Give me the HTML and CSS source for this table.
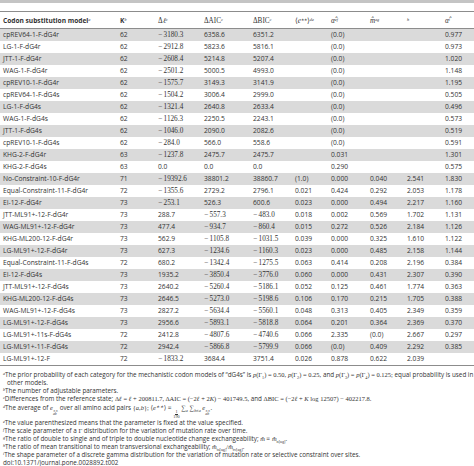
FILE: index.html
```html
<!DOCTYPE html>
<html>
<head>
<meta charset="utf-8">
<link rel="stylesheet" href="styles.css">
</head>
<body>
<div class="topband"></div>
<table class="data">
<colgroup>
<col class="w1"><col class="w2"><col class="w3"><col class="w4"><col class="w5"><col class="w6"><col class="w7"><col class="w8"><col class="w9"><col class="w10">
</colgroup>
<thead>
<tr>
<th class="first">Codon substitution model<sup>a</sup></th>
<th>K<sup>b</sup></th>
<th class="m">Δ<i>ℓ</i><sup>c</sup></th>
<th class="m">ΔAIC<sup>c</sup></th>
<th class="m">ΔBIC<sup>c</sup></th>
<th class="m">⟨<i>e</i><sup class="in">∗∗</sup>⟩<sup>de</sup></th>
<th class="m"><i>α̂</i><sup>ef</sup></th>
<th class="m"><i>m̂</i><sup>eg</sup></th>
<th class="m"><sup>h</sup></th>
<th class="m"><i>α̂</i><sup>i</sup></th>
</tr>
</thead>
<tbody>
<tr><td class="first">cpREV64-1-F-dG4r</td><td>62</td><td class="neg">−<span>3180.3</span></td><td>6358.6</td><td>6351.2</td><td></td><td>(0.0)</td><td></td><td></td><td>0.977</td></tr>
<tr><td class="first">LG-1-F-dG4r</td><td>62</td><td class="neg">−<span>2912.8</span></td><td>5823.6</td><td>5816.1</td><td></td><td>(0.0)</td><td></td><td></td><td>0.973</td></tr>
<tr><td class="first">JTT-1-F-dG4r</td><td>62</td><td class="neg">−<span>2608.4</span></td><td>5214.8</td><td>5207.4</td><td></td><td>(0.0)</td><td></td><td></td><td>1.020</td></tr>
<tr><td class="first">WAG-1-F-dG4r</td><td>62</td><td class="neg">−<span>2501.2</span></td><td>5000.5</td><td>4993.0</td><td></td><td>(0.0)</td><td></td><td></td><td>1.148</td></tr>
<tr><td class="first">cpREV10-1-F-dG4r</td><td>62</td><td class="neg">−<span>1575.7</span></td><td>3149.3</td><td>3141.9</td><td></td><td>(0.0)</td><td></td><td></td><td>1.195</td></tr>
<tr><td class="first">cpREV64-1-F-dG4s</td><td>62</td><td class="neg">−<span>1504.2</span></td><td>3006.4</td><td>2999.0</td><td></td><td>(0.0)</td><td></td><td></td><td>0.505</td></tr>
<tr><td class="first">LG-1-F-dG4s</td><td>62</td><td class="neg">−<span>1321.4</span></td><td>2640.8</td><td>2633.4</td><td></td><td>(0.0)</td><td></td><td></td><td>0.496</td></tr>
<tr><td class="first">WAG-1-F-dG4s</td><td>62</td><td class="neg">−<span>1126.3</span></td><td>2250.5</td><td>2243.1</td><td></td><td>(0.0)</td><td></td><td></td><td>0.573</td></tr>
<tr><td class="first">JTT-1-F-dG4s</td><td>62</td><td class="neg">−<span>1046.0</span></td><td>2090.0</td><td>2082.6</td><td></td><td>(0.0)</td><td></td><td></td><td>0.519</td></tr>
<tr><td class="first">cpREV10-1-F-dG4s</td><td>62</td><td class="neg">−<span>284.0</span></td><td>566.0</td><td>558.6</td><td></td><td>(0.0)</td><td></td><td></td><td>0.591</td></tr>
<tr><td class="first">KHG-2-F-dG4r</td><td>63</td><td class="neg">−<span>1237.8</span></td><td>2475.7</td><td>2475.7</td><td></td><td>0.031</td><td></td><td></td><td>1.301</td></tr>
<tr><td class="first">KHG-2-F-dG4s</td><td>63</td><td>0.0</td><td>0.0</td><td>0.0</td><td></td><td>0.290</td><td></td><td></td><td>0.575</td></tr>
<tr><td class="first">No-Constraint-10-F-dG4r</td><td>71</td><td class="neg">−<span>19392.6</span></td><td>38801.2</td><td>38860.7</td><td>(1.0)</td><td>0.000</td><td>0.040</td><td>2.541</td><td>1.830</td></tr>
<tr><td class="first">Equal-Constraint-11-F-dG4r</td><td>72</td><td class="neg">−<span>1355.6</span></td><td>2729.2</td><td>2796.1</td><td>0.021</td><td>0.424</td><td>0.292</td><td>2.053</td><td>1.178</td></tr>
<tr><td class="first">EI-12-F-dG4r</td><td>73</td><td class="neg">−<span>253.1</span></td><td>526.3</td><td>600.6</td><td>0.023</td><td>0.000</td><td>0.494</td><td>2.217</td><td>1.160</td></tr>
<tr><td class="first">JTT-ML91+-12-F-dG4r</td><td>73</td><td>288.7</td><td class="neg">−<span>557.3</span></td><td class="neg">−<span>483.0</span></td><td>0.018</td><td>0.002</td><td>0.569</td><td>1.702</td><td>1.131</td></tr>
<tr><td class="first">WAG-ML91+-12-F-dG4r</td><td>73</td><td>477.4</td><td class="neg">−<span>934.7</span></td><td class="neg">−<span>860.4</span></td><td>0.015</td><td>0.272</td><td>0.526</td><td>2.184</td><td>1.126</td></tr>
<tr><td class="first">KHG-ML200-12-F-dG4r</td><td>73</td><td>562.9</td><td class="neg">−<span>1105.8</span></td><td class="neg">−<span>1031.5</span></td><td>0.039</td><td>0.000</td><td>0.325</td><td>1.610</td><td>1.122</td></tr>
<tr><td class="first">LG-ML91+-12-F-dG4r</td><td>73</td><td>627.3</td><td class="neg">−<span>1234.6</span></td><td class="neg">−<span>1160.3</span></td><td>0.023</td><td>0.000</td><td>0.485</td><td>2.158</td><td>1.144</td></tr>
<tr><td class="first">Equal-Constraint-11-F-dG4s</td><td>72</td><td>680.2</td><td class="neg">−<span>1342.4</span></td><td class="neg">−<span>1275.5</span></td><td>0.063</td><td>0.414</td><td>0.208</td><td>2.196</td><td>0.384</td></tr>
<tr><td class="first">EI-12-F-dG4s</td><td>73</td><td>1935.2</td><td class="neg">−<span>3850.4</span></td><td class="neg">−<span>3776.0</span></td><td>0.060</td><td>0.000</td><td>0.431</td><td>2.307</td><td>0.390</td></tr>
<tr><td class="first">JTT-ML91+-12-F-dG4s</td><td>73</td><td>2640.2</td><td class="neg">−<span>5260.4</span></td><td class="neg">−<span>5186.1</span></td><td>0.052</td><td>0.125</td><td>0.461</td><td>1.774</td><td>0.363</td></tr>
<tr><td class="first">KHG-ML200-12-F-dG4s</td><td>73</td><td>2646.5</td><td class="neg">−<span>5273.0</span></td><td class="neg">−<span>5198.6</span></td><td>0.106</td><td>0.170</td><td>0.215</td><td>1.705</td><td>0.388</td></tr>
<tr><td class="first">WAG-ML91+-12-F-dG4s</td><td>73</td><td>2827.2</td><td class="neg">−<span>5634.4</span></td><td class="neg">−<span>5560.1</span></td><td>0.048</td><td>0.313</td><td>0.405</td><td>2.349</td><td>0.359</td></tr>
<tr><td class="first">LG-ML91+-12-F-dG4s</td><td>73</td><td>2956.6</td><td class="neg">−<span>5893.1</span></td><td class="neg">−<span>5818.8</span></td><td>0.064</td><td>0.201</td><td>0.364</td><td>2.369</td><td>0.370</td></tr>
<tr><td class="first">LG-ML91+-11s-F-dG4s</td><td>72</td><td>2412.8</td><td class="neg">−<span>4807.6</span></td><td class="neg">−<span>4740.6</span></td><td>0.066</td><td>2.335</td><td>(0.0)</td><td>2.667</td><td>0.297</td></tr>
<tr><td class="first">LG-ML91+-11-F-dG4s</td><td>72</td><td>2942.4</td><td class="neg">−<span>5866.8</span></td><td class="neg">−<span>5799.9</span></td><td>0.066</td><td>(0.0)</td><td>0.409</td><td>2.292</td><td>0.385</td></tr>
<tr><td class="first">LG-ML91+-12-F</td><td>72</td><td class="neg">−<span>1833.2</span></td><td>3684.4</td><td>3751.4</td><td>0.026</td><td>0.878</td><td>0.622</td><td>2.039</td><td></td></tr>
</tbody>
</table>
<div class="notes">
<p class="note"><sup>a</sup>The prior probability of each category for the mechanistic codon models of “dG4s” is <span class="m"><i>p</i>(Γ<sub>1</sub>) = 0.50, <i>p</i>(Γ<sub>2</sub>) = 0.25,</span> and <span class="m"><i>p</i>(Γ<sub>3</sub>) = <i>p</i>(Γ<sub>4</sub>) = 0.125;</span> equal probability is used in<br>other models.</p>
<p class="note"><sup>b</sup>The number of adjustable parameters.</p>
<p class="note"><sup>c</sup>Differences from the reference state; <span class="m">Δ<i>ℓ</i> = <i>ℓ</i> + 200811.7, ΔAIC = (−2<i>ℓ</i> + 2<i>K</i>) − 401749.5,</span> and <span class="m">ΔBIC = (−2<i>ℓ</i> + <i>K</i> log 12507) − 402217.8.</span></p>
<p class="note tall"><sup>d</sup>The average of <span class="m"><i>e</i><span class="ss"><span>∗∗</span><span><i>ab</i></span></span></span> over all amino acid pairs <span class="m">{<i>a</i>,<i>b</i>}; ⟨<i>e</i><sup>∗∗</sup>⟩ ≡ <span class="frac"><span>1</span><span>190</span></span> ∑<sub><i>a</i></sub> ∑<sub><i>b</i>≠<i>a</i></sub> <i>e</i><span class="ss"><span>∗∗</span><span><i>ab</i></span></span>.</span></p>
<p class="note"><sup>e</sup>The value parenthesized means that the parameter is fixed at the value specified.</p>
<p class="note"><sup>f</sup>The scale parameter of a <span class="m">Γ</span> distribution for the variation of mutation rate over time.</p>
<p class="note"><sup>g</sup>The ratio of double to single and of triple to double nucleotide change exchangeability; <span class="m"><i>m̂</i> ≡ <i>m̂</i><sub>n[ag]</sub>.</span></p>
<p class="note"><sup>h</sup>The ratio of mean transitional to mean transversional exchangeability; <span class="m"><i>m̂</i><sub>ts[ag]</sub>/<i>m̂</i><sub>tv[ag]</sub>.</span></p>
<p class="note"><sup>i</sup>The shape parameter of a discrete gamma distribution for the variation of mutation rate or selective constraint over sites.</p>
<p class="doi">doi:10.1371/journal.pone.0028892.t002</p>
</div>
</body>
</html>
```

FILE: styles.css
```css
html, body {
  margin: 0;
  padding: 0;
}
body {
  width: 474px;
  height: 466px;
  overflow: hidden;
  background: #ffffff;
  color: #333333;
  font-family: "Open Sans", "DejaVu Sans", sans-serif;
}
.topband {
  height: 3px;
  background: #c4c4c4;
  margin-bottom: 8px;
}
.data {
  border-collapse: collapse;
  table-layout: fixed;
  width: 474px;
}
.w1 { width: 118px; }
.w2 { width: 38px; }
.w3 { width: 46px; }
.w4 { width: 49px; }
.w5 { width: 42px; }
.w6 { width: 36px; }
.w7 { width: 39px; }
.w8 { width: 37px; }
.w9 { width: 38px; }
.w10 { width: 31px; }
.data thead tr {
  border-top: 1px solid #8c8c8c;
  border-bottom: 1px solid #8c8c8c;
}
.data th {
  height: 15px;
  padding: 1px 0 0 2px;
  font-size: 6.6px;
  font-weight: 700;
  text-align: left;
  vertical-align: middle;
  white-space: nowrap;
  line-height: 8px;
}
.data th.m {
  font-family: "Liberation Serif", "DejaVu Serif", serif;
  font-weight: 400;
  font-size: 7.2px;
}
.data th.first,
.data td.first {
  padding-left: 3px;
}
.data tbody tr:nth-child(odd) {
  background: #dadada;
}
.data tbody tr:last-child {
  border-bottom: 1px solid #8c8c8c;
}
.data td {
  height: 12px;
  padding: 0 0 0 2px;
  font-size: 6.7px;
  line-height: 12px;
  white-space: nowrap;
  vertical-align: middle;
}
.data td.neg {
  font-family: "Liberation Serif", "DejaVu Serif", serif;
  font-size: 7.2px;
}
.data td.neg span {
  margin-left: 1.5px;
}
sup {
  font-size: 4.2px;
  line-height: 0;
  vertical-align: 2.5px;
  font-style: italic;
  font-weight: 400;
  font-family: "Liberation Serif", serif;
}
sup.in {
  font-style: normal;
}
sub {
  font-size: 4.2px;
  line-height: 0;
  vertical-align: -1.5px;
}
.notes {
  margin-top: 5px;
  font-size: 6.3px;
  line-height: 8px;
  white-space: nowrap;
}
.note {
  margin: 0;
  padding-left: 7px;
  text-indent: -4px;
}
.note.tall {
  line-height: 9px;
}
.doi {
  margin: 0;
  padding-left: 3px;
}
.notes .m {
  font-family: "Liberation Serif", "DejaVu Serif", serif;
  font-size: 6.5px;
  line-height: 0;
}
.ss {
  display: inline-flex;
  flex-direction: column;
  font-size: 3.8px;
  line-height: 3.6px;
  vertical-align: -1.5px;
  text-indent: 0;
}
.frac {
  display: inline-flex;
  flex-direction: column;
  align-items: center;
  font-size: 4.2px;
  line-height: 4.2px;
  vertical-align: -2.5px;
  text-indent: 0;
}
.frac span:first-child {
  border-bottom: 0.5px solid #333333;
  padding: 0 0.5px;
}
```
